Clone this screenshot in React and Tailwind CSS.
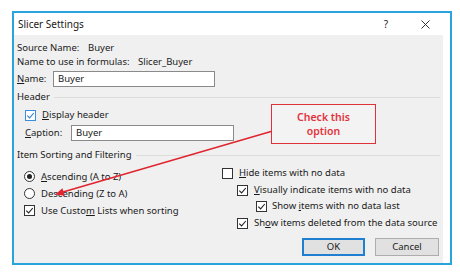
import React from "react";

const Check = ({ blue }) => (
  <span
    className={
      "w-[11px] h-[11px] shrink-0 border bg-white flex items-center justify-center " +
      (blue ? "border-[#3b8ede]" : "border-[#333333]")
    }
  >
    <svg width="9" height="9" viewBox="0 0 9 9">
      <path
        d="M1.3 4.6 L3.6 6.9 L7.8 2"
        fill="none"
        stroke={blue ? "#2f7fd3" : "#222"}
        strokeWidth="1.1"
      />
    </svg>
  </span>
);

const Empty = () => (
  <span className="w-[11px] h-[11px] shrink-0 border border-[#333333] bg-white" />
);

const Radio = ({ on }) => (
  <span className="w-[11px] h-[11px] shrink-0 rounded-full border border-[#333333] bg-white flex items-center justify-center">
    {on && <span className="w-[5px] h-[5px] rounded-full bg-[#222]" />}
  </span>
);

export default function App() {
  return (
    <div
      className="relative w-[460px] h-[276px] bg-white overflow-hidden pt-[11px] pl-[12px] text-[#1a1a1a]"
      style={{ fontFamily: '"Noto Sans", "Open Sans", sans-serif' }}
    >
      <div className="w-[440px] h-[254px] border-2 border-[#2aa4dc] bg-white flex flex-col">
        {/* Title bar */}
        <div className="h-[22px] flex items-center pl-[4px] pr-[20px] text-[10px]">
          <span>Slicer Settings</span>
          <div className="ml-auto flex items-center gap-[33px]">
            <span className="text-[10px]">?</span>
            <svg width="9" height="9" viewBox="0 0 9 9">
              <path d="M0.5 0.5 L8.5 8.5 M8.5 0.5 L0.5 8.5" stroke="#333" strokeWidth="1" />
            </svg>
          </div>
        </div>
        {/* Body */}
        <div className="flex flex-1">
          <div className="w-[429px] bg-[#f0f0f0] pl-[3px] pt-[6px] text-[9.5px] leading-none flex flex-col">
            <div className="h-[14px] flex items-center">
              <span className="w-[71px]">Source Name:</span>
              <span>Buyer</span>
            </div>
            <div className="h-[14px] flex items-center">
              <span className="w-[121px]">Name to use in formulas:</span>
              <span>Slicer_Buyer</span>
            </div>
            <div className="mt-[2px] h-[16px] flex items-center">
              <span className="w-[36px]">
                <u>N</u>ame:
              </span>
              <div className="w-[162px] h-[16px] bg-white border border-[#8a8a8a] flex items-center pl-[4px]">
                Buyer
              </div>
            </div>
            <div className="h-[20px] flex items-center gap-[4px]">
              <span>Header</span>
              <div className="flex-1 h-px bg-[#dcdcdc] mr-[3px]" />
            </div>
            <div className="h-[16px] flex items-center pl-[8px] gap-[6px]">
              <Check blue />
              <span>
                <u>D</u>isplay header
              </span>
            </div>
            <div className="mt-[2px] h-[16px] flex items-center pl-[8px]">
              <span className="w-[46px]">
                <u>C</u>aption:
              </span>
              <div className="w-[163px] h-[16px] bg-white border border-[#8a8a8a] flex items-center pl-[4px]">
                Buyer
              </div>
            </div>
            <div className="mt-[6px] h-[16px] flex items-center gap-[4px]">
              <span>Item Sorting and Filtering</span>
              <div className="flex-1 h-px bg-[#dcdcdc] mr-[3px]" />
            </div>
            <div className="flex">
              <div className="w-[205px] pl-[7px] pt-[5px] flex flex-col">
                <div className="h-[17px] flex items-center gap-[6px]">
                  <Radio on />
                  <span>
                    <u>A</u>scending (A to Z)
                  </span>
                </div>
                <div className="h-[17px] flex items-center gap-[6px]">
                  <Radio />
                  <span>
                    Descendin<u>g</u> (Z to A)
                  </span>
                </div>
                <div className="h-[17px] flex items-center gap-[6px]">
                  <Check />
                  <span>
                    Use Custo<u>m</u> Lists when sorting
                  </span>
                </div>
              </div>
              <div className="flex-1 pt-[2px] flex flex-col">
                <div className="h-[16px] flex items-center gap-[6px]">
                  <Empty />
                  <span>
                    <u>H</u>ide items with no data
                  </span>
                </div>
                <div className="mt-[1px] h-[16px] flex items-center gap-[6px] pl-[15px]">
                  <Check />
                  <span>
                    <u>V</u>isually indicate items with no data
                  </span>
                </div>
                <div className="h-[16px] flex items-center gap-[5px] pl-[34px]">
                  <Check />
                  <span>
                    Show <u>i</u>tems with no data last
                  </span>
                </div>
                <div className="mt-[1px] h-[16px] flex items-center gap-[6px] pl-[15px]">
                  <Check />
                  <span>
                    Sh<u>o</u>w items deleted from the data source
                  </span>
                </div>
                <div className="mt-[7px] flex justify-end gap-[10px] pr-[4px]">
                  <button className="w-[63px] h-[18px] bg-[#e1e1e1] border-2 border-[#1f7fd1] flex items-center justify-center text-[9.5px]">
                    OK
                  </button>
                  <button className="w-[64px] h-[18px] bg-[#e1e1e1] border border-[#adadad] flex items-center justify-center text-[9.5px]">
                    Cancel
                  </button>
                </div>
              </div>
            </div>
          </div>
          <div className="flex-1 bg-white" />
        </div>
      </div>

      {/* Annotation callout */}
      <div className="absolute left-[271px] top-[104px] w-[105px] h-[40px] border-[1.5px] border-[#e0303a] bg-[#f3f3f3] flex flex-col items-center justify-center text-[#e3323c] text-[10.5px] font-semibold leading-[14px]">
        <span>Check this</span>
        <span>option</span>
      </div>
      <svg className="absolute left-0 top-0 pointer-events-none" width="460" height="276">
        <line x1="271" y1="131.5" x2="63" y2="192" stroke="#e0252f" strokeWidth="1.5" />
        <polygon points="55,194.5 64.7,195.8 62.5,188.2" fill="#e0252f" />
      </svg>
    </div>
  );
}
